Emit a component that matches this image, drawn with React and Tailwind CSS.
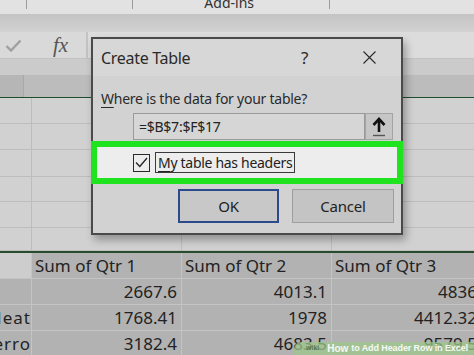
const upperRows = [26, 26, 27, 25, 26, 23]

const tableRows = [
  { cells: ['', 'Sum of Qtr 1', 'Sum of Qtr 2', 'Sum of Qtr 3'], head: true },
  { cells: ['', '2667.6', '4013.1', '4836'] },
  { cells: ['Meat', '1768.41', '1978', '4412.32'] },
  { cells: ['Ferro', '3182.4', '4683.5', '9579.5'] },
]

function UpArrow() {
  return (
    <svg width="14" height="20" viewBox="0 0 14 20">
      <path d="M7 2 L7 15" stroke="#111" strokeWidth="2.6" />
      <path d="M1.5 8 L7 2 L12.5 8" stroke="#111" strokeWidth="2.6" fill="none" />
      <path d="M1 18.5 L13 18.5" stroke="#555" strokeWidth="1.4" />
    </svg>
  )
}

function CheckMark() {
  return (
    <svg width="13" height="11" viewBox="0 0 13 11">
      <path d="M1 5.5 L4.8 9.5 L12 1" stroke="#222" strokeWidth="1.3" fill="none" />
    </svg>
  )
}

export default function App() {
  return (
    <div className="relative w-[474px] h-[355px] overflow-hidden bg-[#d3d3d3] font-['Noto_Sans',sans-serif] text-[#222]">
      {/* ribbon */}
      <div className="h-[14px] bg-[#e2e2e2] flex overflow-hidden">
        <div className="w-[27px] border-r border-[#9c9c9c] h-[9px]" />
        <div className="w-[106px] border-r border-[#9c9c9c] h-[9px]" />
        <div className="w-[197px] border-r border-[#9c9c9c] h-[9px] flex justify-end pr-[75px]">
          <span className="text-[14px] leading-[14px] -mt-[4px] text-[#333]">Add-ins</span>
        </div>
      </div>
      <div className="h-[18px] bg-gradient-to-b from-[#c4c4c4] to-[#d2d2d2]" />

      {/* formula bar */}
      <div className="h-[27px] flex border-b border-[#c2c2c2] bg-[#d9d9d9]">
        <div className="w-[88px] flex items-center border-r-2 border-[#c4c4c4]">
          <svg className="ml-[5px]" width="17" height="13" viewBox="0 0 17 13">
            <path d="M1.5 7 L6 11.5 L15.5 1.5" stroke="#a0a0a0" strokeWidth="2.4" fill="none" />
          </svg>
          <span className="ml-[31px] text-[21px] leading-none italic font-['Liberation_Serif',serif] text-[#555]">fx</span>
        </div>
        <div className="flex-1 bg-[#dcdcdc]" />
      </div>
      <div className="h-[16px] bg-[#cbcbcb]" />

      {/* column letters */}
      <div className="h-[22px] flex bg-[#bcbcbc] text-[16px] text-[#333]">
        <div className="w-[32px] border-r border-[#a8a8a8] bg-[#b6b6b6]" />
        <div className="w-[150px] shrink-0 border-r border-[#a8a8a8]" />
        <div className="w-[150px] shrink-0 border-r border-[#a8a8a8]" />
        <div className="w-[150px] shrink-0 flex items-center justify-center leading-none">E</div>
      </div>
      <div className="h-[1px] bg-[#1f4e2c]" />

      {/* upper grid */}
      {upperRows.map((h, i) => (
        <div key={i} className="flex bg-[#d1d1d1] border-b border-[#bdbdbd]" style={{ height: h }}>
          <div className="w-[32px] shrink-0 border-r border-[#bdbdbd]" />
          <div className="w-[150px] shrink-0 border-r border-[#bdbdbd]" />
          <div className="w-[150px] shrink-0 border-r border-[#bdbdbd]" />
          <div className="w-[150px] shrink-0" />
        </div>
      ))}
      <div className="h-[2px] bg-[#2a4a30]" />

      {/* pivot table */}
      {tableRows.map((r, i) => (
        <div key={i} className="h-[26px] flex border-b border-[#c4c4c4] text-[17px] leading-[26px]">
          <div className={`w-[32px] shrink-0 border-r border-[#c4c4c4] overflow-hidden flex justify-end ${r.head ? 'bg-[#cdcdcd]' : 'bg-[#b2b2b2]'}`}>
            <span className="whitespace-nowrap tracking-[1px]">{r.cells[0]}</span>
          </div>
          {r.cells.slice(1).map((c, j) => (
            <div
              key={j}
              className={`w-[150px] shrink-0 border-r border-[#c4c4c4] bg-[#b2b2b2] overflow-hidden whitespace-nowrap ${r.head ? 'pl-[3px] text-left' : 'pr-[4px] text-right'}`}
            >
              {c}
            </div>
          ))}
        </div>
      ))}

      {/* Create Table dialog */}
      <div className="absolute left-[91px] top-[37px] w-[312px] h-[198px] border-2 border-[#4a4a4a] bg-[#d2d2d2] shadow-[3px_5px_8px_rgba(0,0,0,0.3)] flex flex-col">
        <div className="h-[37px] bg-[#d7d7d7] flex items-center pl-[8px] text-[16px] tracking-[-0.3px] text-[#2a2a2a]">
          <span>Create Table</span>
          <span className="ml-auto mr-[55px] text-[17px]">?</span>
          <svg className="mr-[25px]" width="13" height="13" viewBox="0 0 13 13">
            <path d="M0.5 0.5 L12.5 12.5 M12.5 0.5 L0.5 12.5" stroke="#2a2a2a" strokeWidth="1.1" />
          </svg>
        </div>
        <div className="flex-1 flex flex-col pl-[8px] pt-[13px]">
          <div className="text-[14px] tracking-[-0.25px] leading-[20px] text-[#2a2a2a]">
            <span className="underline underline-offset-[3px]">W</span>here is the data for your table?
          </div>
          <div className="mt-[4px] ml-[32px] flex h-[27px]">
            <div className="w-[232px] border border-[#9a9a9a] bg-[#d6d6d6] text-[14px] tracking-[-0.25px] leading-[25px] pl-[5px]">=$B$7:$F$17</div>
            <div className="w-[28px] border border-[#a4a4a4] bg-[#c6c6c6] flex items-center justify-center">
              <UpArrow />
            </div>
          </div>
          <div className="mt-[1px] -ml-[10px] -mr-[2px] h-[43px] border-[6px] border-[#1fe31f] bg-[#ededed] flex items-center pl-[36px]">
            <div className="w-[17px] h-[18px] border-[1.5px] border-[#2a2a2a] bg-[#ededed] flex items-center justify-center">
              <CheckMark />
            </div>
            <div className="ml-[5px] h-[21px] px-[2px] border border-[#3a3a3a] text-[14px] tracking-[-0.3px] leading-[19px] text-[#222]">
              <span className="underline underline-offset-[3px]">M</span>y table has headers
            </div>
          </div>
          <div className="mt-[5px] flex justify-end gap-[13px] pr-[7px]">
            <button className="w-[101px] h-[34px] border-2 border-[#2d4a8c] bg-[#c8c8c8] text-[15px] tracking-[-0.2px] text-[#222]">OK</button>
            <button className="w-[102px] h-[34px] border border-[#9e9e9e] bg-[#c4c4c4] text-[15px] tracking-[-0.2px] text-[#222]">Cancel</button>
          </div>
        </div>
      </div>

      {/* watermark */}
      <div className="absolute right-0 bottom-0 w-[180px] h-[13px] rounded-tl-[7px] bg-[#9cc689]/75 flex items-center pl-[12px] font-['Liberation_Sans',sans-serif] text-[9px] font-bold text-white/90 whitespace-nowrap">
        <span className="text-[7px] text-[#3a5a30]/70 mr-[8px]">wiki</span>
        <span className="text-[10px]">How</span>
        <span className="ml-[3px] font-semibold tracking-[-0.1px]">to Add Header Row in Excel</span>
      </div>
    </div>
  )
}
